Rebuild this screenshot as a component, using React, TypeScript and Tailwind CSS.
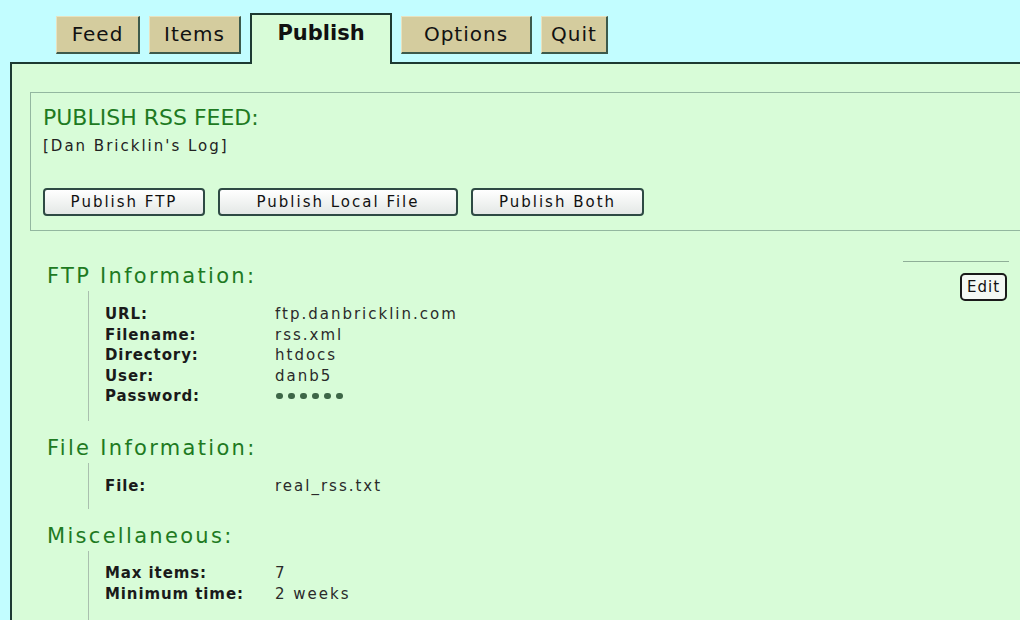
import React from 'react'

const tabs = ['Feed', 'Items', 'Publish', 'Options', 'Quit']

const ftpRows: [string, string][] = [
  ['URL:', 'ftp.danbricklin.com'],
  ['Filename:', 'rss.xml'],
  ['Directory:', 'htdocs'],
  ['User:', 'danb5'],
  ['Password:', '******'],
]

const miscRows: [string, string][] = [
  ['Max items:', '7'],
  ['Minimum time:', '2 weeks'],
]

function Tab({ label }: { label: string }) {
  if (label === 'Publish') {
    return (
      <div className="relative z-10 -mb-[2px] flex h-[51px] w-[142px] justify-center border-2 border-b-0 border-[#1d3a32] bg-[#d8fcd8] pt-[3px] text-[21px] font-bold text-[#111]">
        {label}
      </div>
    )
  }
  const widths: Record<string, string> = {
    Feed: 'w-[84px]',
    Items: 'w-[92px]',
    Options: 'w-[131px]',
    Quit: 'w-[67px]',
  }
  return (
    <div
      className={`mb-[8px] flex h-[38px] items-center justify-center border-t border-l border-t-[#e8e2c0] border-l-[#e8e2c0] border-r-2 border-b-2 border-r-[#3c5a4c] border-b-[#3c5a4c] bg-[#d4cc9e] pb-[2px] text-[20px] tracking-[1px] text-[#111] ${widths[label]}`}
    >
      {label}
    </div>
  )
}

function InfoBlock({ rows, pad }: { rows: [string, string][]; pad: string }) {
  return (
    <div className={`ml-[76px] mt-[3px] border-l border-[#a9bfae] pl-[16px] ${pad}`}>
      {rows.map(([k, v]) => (
        <div key={k} className="flex h-[20.5px] items-center text-[15px]">
          <div className="w-[170px] font-bold tracking-[0.9px] text-[#1a1a1a]">{k}</div>
          {k === 'Password:' ? (
            <div className="flex gap-[5px] pl-[1px]">
              {[0, 1, 2, 3, 4, 5].map((i) => (
                <span key={i} className="h-[6px] w-[7px] rounded-full bg-[#3d6647]" />
              ))}
            </div>
          ) : (
            <div className="tracking-[2px] text-[#2a2a2a]">{v}</div>
          )}
        </div>
      ))}
    </div>
  )
}

function Heading({ children }: { children: React.ReactNode }) {
  return <h2 className="ml-[35px] h-[24px] text-[21px] leading-[24px] tracking-[2.3px] text-[#1e7a22]">{children}</h2>
}

export default function App() {
  return (
    <div className="h-[620px] w-[1020px] overflow-hidden bg-[#c2fdff] pt-[13px] font-['DejaVu_Sans',sans-serif]">
      {/* Tabs */}
      <div className="flex items-end gap-[9px] pl-[56px]">
        {tabs.map((t) => (
          <Tab key={t} label={t} />
        ))}
      </div>

      {/* Panel */}
      <div className="ml-[10px] h-[600px] border-t-2 border-l-2 border-[#1d3a32] bg-[#d8fcd8] pt-[28px]">
        <div className="ml-[18px] border border-r-0 border-[#93b7a0] pl-[12px] pt-[12px] pb-[14px]">
          <div className="h-[26px] text-[22px] leading-[26px] text-[#1e7a22]">PUBLISH RSS FEED:</div>
          <div className="mt-[6px] h-[18px] text-[15px] leading-[18px] tracking-[2px] text-[#222]">[Dan Bricklin's Log]</div>
          <div className="mt-[33px] flex gap-[13px]">
            {[
              ['Publish FTP', 'w-[162px]'],
              ['Publish Local File', 'w-[240px]'],
              ['Publish Both', 'w-[173px]'],
            ].map(([label, w]) => (
              <button
                key={label}
                className={`h-[28px] rounded-[4px] border-2 border-[#2e4a44] bg-gradient-to-b from-[#ffffff] to-[#e4e8e6] text-[15px] tracking-[2px] text-[#111] ${w}`}
              >
                {label}
              </button>
            ))}
          </div>
        </div>

        {/* FTP information */}
        <div className="flex justify-between pr-[11px]">
          <div>
            <div className="pt-[33px]">
              <Heading>FTP Information:</Heading>
            </div>
            <InfoBlock rows={ftpRows} pad="pt-[13px] pb-[14px]" />
          </div>
          <div className="flex w-[106px] flex-col items-end pt-[30px]">
            <div className="h-px w-full bg-[#8fae98]" />
            <button className="mr-[2px] mt-[11px] h-[28px] w-[47px] rounded-[5px] border-2 border-[#1a1a1a] bg-[#f4f8f4] text-[15px] tracking-[1px] text-[#111]">
              Edit
            </button>
          </div>
        </div>

        <div className="mt-[15.5px]">
          <Heading>File Information:</Heading>
        </div>
        <InfoBlock rows={[['File:', 'real_rss.txt']]} pad="pt-[13px] pb-[12px]" />

        <div className="mt-[15.5px]">
          <Heading>Miscellaneous:</Heading>
        </div>
        <InfoBlock rows={miscRows} pad="pt-[12px] pb-[40px]" />
      </div>
    </div>
  )
}
